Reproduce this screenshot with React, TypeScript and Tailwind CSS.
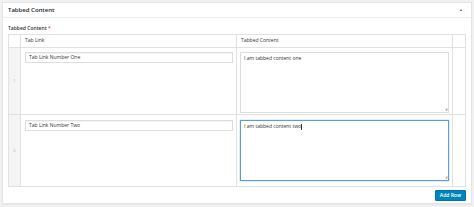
import React from 'react';

const rows = [
    { n: 1, link: 'Tab Link Number One', content: 'I am tabbed content one', focus: false, pad: 'pt-[4px] pb-[1px]' },
    { n: 2, link: 'Tab Link Number Two', content: 'I am tabbed content two', focus: true, pad: 'pt-[5px] pb-[5px]' },
];

export default function App() {
    return (
        <div className="w-[474px] h-[207px] bg-[#f1f1f1] p-[2px] font-['Open_Sans',sans-serif] text-[#444]">
            <div className="bg-white border border-[#e5e5e5] shadow-[0_1px_1px_rgba(0,0,0,0.04)] h-[202px] flex flex-col">
                <div className="flex items-center justify-between h-[15px] px-[5px] border-b border-[#eee]">
                    <span className="text-[6px] font-semibold text-[#23282d]">Tabbed Content</span>
                    <span className="text-[4px] text-[#72777c] mr-[3px]">▲</span>
                </div>
                <div className="px-[5px] pt-[7px] flex flex-col">
                    <div className="text-[5px] font-semibold text-[#333] mb-[3px] leading-[6px]">
                        Tabbed Content <span className="text-[#dc3232]">*</span>
                    </div>
                    <div className="border border-[#e1e1e1] flex flex-col">
                        <div className="flex h-[13px] border-b border-[#e1e1e1] text-[5px] text-[#333]">
                            <div className="w-[12px] border-r border-[#e1e1e1]" />
                            <div className="w-[216px] border-r border-[#e1e1e1] flex items-center pl-[4px]">Tab Link</div>
                            <div className="w-[216px] border-r border-[#e1e1e1] flex items-center pl-[4px]">Tabbed Content</div>
                            <div className="flex-1" />
                        </div>
                        {rows.map((r, i) => (
                            <div key={r.n} className={`flex ${i === 0 ? 'border-b border-[#e1e1e1]' : ''}`}>
                                <div className="w-[12px] bg-[#f4f4f4] border-r border-[#e1e1e1] flex items-center justify-center text-[4px] text-[#aaa]">
                                    {r.n}
                                </div>
                                <div className={`w-[216px] border-r border-[#e1e1e1] pl-[4px] pr-[3px] ${r.pad}`}>
                                    <div className="h-[11px] border border-[#ddd] shadow-[inset_0_1px_1px_rgba(0,0,0,0.05)] flex items-center pl-[3px] text-[5px] text-[#333]">
                                        {r.link}
                                    </div>
                                </div>
                                <div className={`w-[216px] border-r border-[#e1e1e1] px-[3px] ${r.pad}`}>
                                    <div className={`h-[61px] relative border ${r.focus ? 'border-[#5b9dd9] shadow-[0_0_1px_rgba(30,140,190,0.8)]' : 'border-[#ddd]'} pl-[3px] pt-[2px] text-[5px] text-[#333]`}>
                                        {r.content}
                                        {r.focus && <span className="inline-block w-px h-[6px] bg-[#333] align-middle" />}
                                        <span className="absolute right-[1px] bottom-[1px] text-[3px] leading-none text-[#999]">◢</span>
                                    </div>
                                </div>
                                <div className="flex-1" />
                            </div>
                        ))}
                    </div>
                    <div className="flex justify-end pt-[3px]">
                        <button className="h-[11px] px-[4px] bg-[#0085ba] border border-[#0073aa] rounded-[1px] text-white text-[5px] font-semibold leading-none">
                            Add Row
                        </button>
                    </div>
                </div>
            </div>
        </div>
    );
}
